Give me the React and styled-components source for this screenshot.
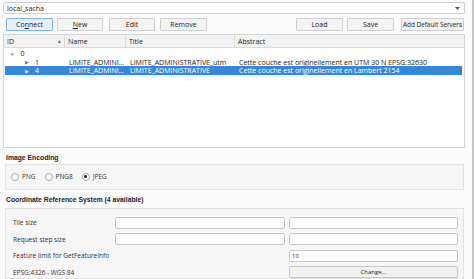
import React from 'react';
import styled, { createGlobalStyle } from 'styled-components';

const Global = createGlobalStyle`
  html, body { margin: 0; padding: 0; background: #fbfbfb; }
  body { width: 474px; height: 279px; overflow: hidden; font-family: "Open Sans", "Liberation Sans", sans-serif; font-size: 7px; color: #222; }
`;

const Page = styled.div`
  display: flex;
  width: 474px;
  height: 279px;
`;

const Content = styled.div`
  width: 462px;
  padding: 2px 0 0 3px;
  display: flex;
  flex-direction: column;
`;

const ScrollBar = styled.div`
  margin-left: auto;
  width: 2px;
  background: #c6c6c6;
`;

const Combo = styled.div`
  height: 13px;
  border: 1px solid #cfcfcf;
  border-radius: 2px;
  background: #fff;
  display: flex;
  align-items: center;
  padding: 0 4px 0 3px;
  box-sizing: border-box;
  span { flex: 1; }
`;

const Arrow = styled.svg`
  width: 5px;
  height: 3px;
`;

const ButtonRow = styled.div`
  display: flex;
  align-items: center;
  margin-top: 4px;
  padding-left: 3px;
  height: 13px;
`;

const Btn = styled.div`
  width: ${p => p.$w}px;
  margin-right: ${p => p.$gap || 0}px;
  height: 13px;
  box-sizing: border-box;
  border: 1px solid ${p => (p.$active ? '#7fb4e6' : '#d0d0d0')};
  background: ${p => (p.$active ? '#e6f0fa' : '#f3f3f3')};
  border-radius: 1px;
  display: flex;
  align-items: center;
  justify-content: center;
  white-space: nowrap;
  font-size: ${p => (p.$tight ? '6.4px' : '7px')};
  u { text-decoration: underline; }
`;

const Spacer = styled.div`
  flex: 1;
`;

const Tree = styled.div`
  margin-top: 3px;
  height: 119px;
  box-sizing: border-box;
  border: 1px solid #d4d4d4;
  background: #fff;
  display: flex;
  flex-direction: column;
`;

const cols = '61px 61px 109px 1fr';

const Header = styled.div`
  display: grid;
  grid-template-columns: ${cols};
  height: 12px;
  background: #f2f2f2;
  border-bottom: 1px solid #dadada;
  margin-bottom: 1px;
`;

const HeadCell = styled.div`
  display: flex;
  align-items: center;
  padding-left: 3px;
  border-right: ${p => (p.$last ? 'none' : '1px solid #dadada')};
  position: relative;
`;

const SortMark = styled.span`
  position: absolute;
  right: 2px;
  top: 3px;
  font-size: 5px;
  color: #666;
`;

const Row = styled.div`
  display: grid;
  grid-template-columns: ${cols};
  height: 8.5px;
  align-items: center;
  margin: 0 2px 0 1px;
  background: ${p => (p.$sel ? '#3388dc' : 'transparent')};
  color: ${p => (p.$sel ? '#fff' : '#222')};
  white-space: nowrap;
  overflow: hidden;
`;

const Cell = styled.div`
  padding-left: ${p => p.$indent || 3}px;
  overflow: hidden;
  display: flex;
  align-items: center;
  gap: 6px;
`;

const Tri = styled.span`
  font-size: 4.5px;
  color: ${p => (p.$sel ? '#dce9f7' : '#777')};
`;

const Heading = styled.div`
  font-family: "Liberation Sans", Arial, sans-serif;
  font-weight: bold;
  font-size: 6.8px;
  margin: ${p => p.$m};
  padding-left: 3px;
`;

const GroupBox = styled.div`
  border: 1px solid #e2e2e2;
  background: #f6f6f6;
  margin-right: 1px;
  margin-left: 2px;
  box-sizing: border-box;
`;

const RadioRow = styled(GroupBox)`
  height: 27px;
  display: flex;
  align-items: center;
  padding-left: 5px;
  gap: 9px;
`;

const Radio = styled.label`
  display: flex;
  align-items: center;
  gap: 3px;
  font-size: 6.5px;
  color: #333;
`;

const Dot = styled.span`
  width: 8px;
  height: 8px;
  border-radius: 50%;
  border: 1px solid #a8a8a8;
  background: #fff;
  box-sizing: border-box;
  display: flex;
  align-items: center;
  justify-content: center;
  &::after {
    content: '';
    width: 3px;
    height: 3px;
    border-radius: 50%;
    background: ${p => (p.$on ? '#222' : 'transparent')};
  }
`;

const CrsBox = styled(GroupBox)`
  flex: 1;
  padding: 8px 7px 0 7px;
  display: grid;
  grid-template-columns: 98px 170px 169px;
  grid-auto-rows: 12px;
  row-gap: 4.5px;
  column-gap: 4px;
  align-items: center;
  margin-top: 5px;
`;

const Label = styled.div`
  font-size: 6.5px;
  color: #333;
  white-space: nowrap;
`;

const Input = styled.div`
  height: 12px;
  box-sizing: border-box;
  border: 1px solid #c8c8c8;
  border-radius: 2px;
  background: #fff;
  grid-column: ${p => p.$col || 'auto'};
  font-size: 6px;
  display: flex;
  align-items: center;
  padding-left: 2px;
`;

const ChangeBtn = styled(Input)`
  background: #f1f1f1;
  justify-content: center;
  padding: 0;
`;

export default function App() {
  return (
    <Page>
      <Global />
      <Content>
        <Combo>
          <span>local_sacha</span>
          <Arrow viewBox="0 0 5 3"><path d="M0 0 L5 0 L2.5 3 Z" fill="#555" /></Arrow>
        </Combo>
        <ButtonRow>
          <Btn $w={47} $gap={4} $active>Co<u>n</u>nect</Btn>
          <Btn $w={46} $gap={6}><u>N</u>ew</Btn>
          <Btn $w={46} $gap={5}>Edit</Btn>
          <Btn $w={47}>Remove</Btn>
          <Spacer />
          <Btn $w={47} $gap={4}>Load</Btn>
          <Btn $w={47} $gap={7}>Save</Btn>
          <Btn $w={63} $gap={1} $tight>Add Default Servers</Btn>
        </ButtonRow>
        <Tree>
          <Header>
            <HeadCell>ID<SortMark>▲</SortMark></HeadCell>
            <HeadCell>Name</HeadCell>
            <HeadCell>Title</HeadCell>
            <HeadCell $last>Abstract</HeadCell>
          </Header>
          <Row>
            <Cell $indent={5}><Tri>▼</Tri>0</Cell>
            <Cell />
            <Cell />
            <Cell />
          </Row>
          <Row>
            <Cell $indent={20}><Tri>▶</Tri>1</Cell>
            <Cell>LIMITE_ADMINI...</Cell>
            <Cell>LIMITE_ADMINISTRATIVE_utm</Cell>
            <Cell>Cette couche est originellement en UTM 30 N EPSG:32630</Cell>
          </Row>
          <Row $sel>
            <Cell $indent={20}><Tri $sel>▶</Tri>4</Cell>
            <Cell>LIMITE_ADMINI...</Cell>
            <Cell>LIMITE_ADMINISTRATIVE</Cell>
            <Cell>Cette couche est originellement en Lambert 2154</Cell>
          </Row>
        </Tree>
        <Heading $m="6px 0 3px">Image Encoding</Heading>
        <RadioRow>
          <Radio><Dot />PNG</Radio>
          <Radio><Dot />PNG8</Radio>
          <Radio><Dot $on />JPEG</Radio>
        </RadioRow>
        <Heading $m="6px 0 0">Coordinate Reference System (4 available)</Heading>
        <CrsBox>
          <Label>Tile size</Label>
          <Input />
          <Input />
          <Label>Request step size</Label>
          <Input />
          <Input />
          <Label>Feature limit for GetFeatureInfo</Label>
          <Input $col="3">10</Input>
          <Label>EPSG:4326 - WGS 84</Label>
          <ChangeBtn $col="3">Change...</ChangeBtn>
        </CrsBox>
      </Content>
      <ScrollBar />
    </Page>
  );
}
